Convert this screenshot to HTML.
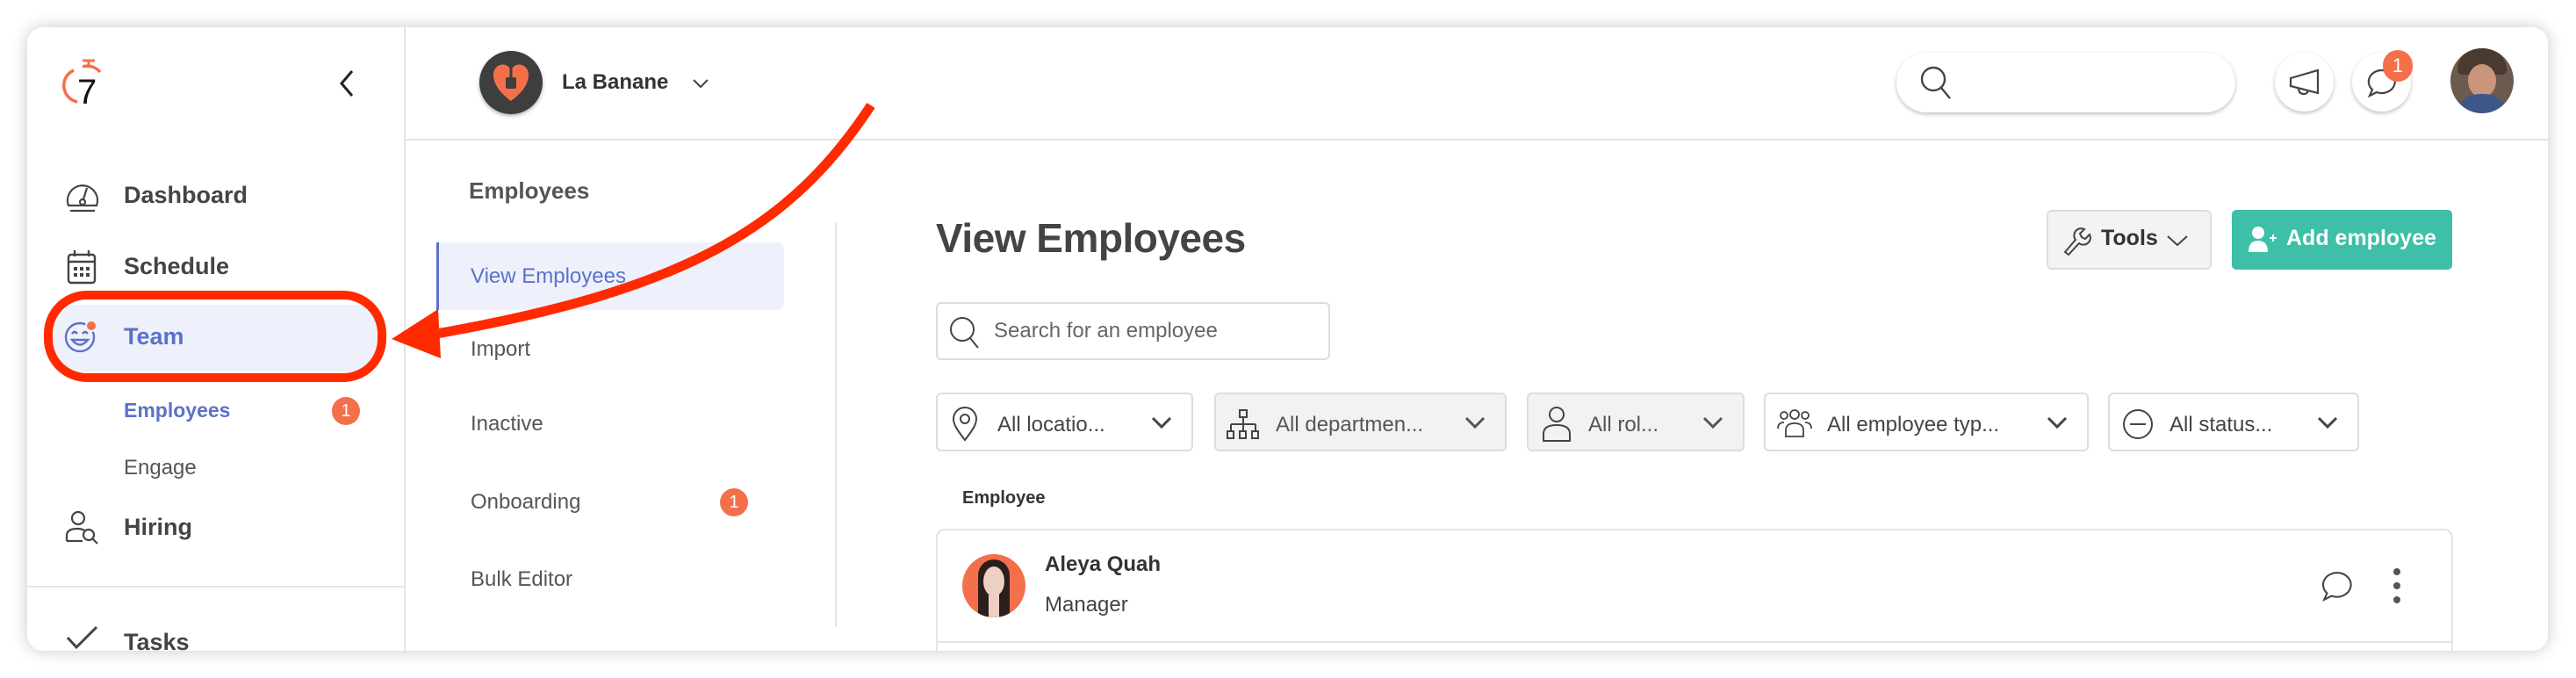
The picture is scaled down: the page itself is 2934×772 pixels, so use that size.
<!DOCTYPE html>
<html><head><meta charset="utf-8"><style>
*{box-sizing:border-box;margin:0;padding:0}
body{width:2934px;height:772px;background:#fff;font-family:"Liberation Sans",Arial,sans-serif;position:relative;overflow:hidden;color:#444}
.card{position:absolute;left:31px;top:31px;width:2871px;height:710px;background:#fff;border-radius:18px;box-shadow:0 0 18px rgba(0,0,0,.22);overflow:hidden}
.in{position:absolute;left:-31px;top:-31px;width:2934px;height:772px}
.a{position:absolute}
.t{position:absolute;white-space:nowrap;line-height:1}
.nav{font-size:27px;font-weight:bold;color:#444}
.sub{font-size:24px;color:#555}
.badge{position:absolute;width:32px;height:32px;border-radius:50%;background:#f4704a;color:#fff;font-size:20px;text-align:center;line-height:32px}
.box{position:absolute;border:2px solid #ddd;border-radius:6px;background:#fff}
.flt{top:447px;height:67px}
.ft{position:absolute;top:21px;font-size:24px;color:#444;white-space:nowrap}
.chev{position:absolute;top:24px;right:22px}
</style></head><body>
<div class="card"><div class="in">
 <div class="a" style="left:460px;top:0;width:2px;height:772px;background:#e4e4e4"></div>
 <div class="a" style="left:0;top:667px;width:461px;height:2px;background:#e4e4e4"></div>
 <div class="a" style="left:461px;top:158px;width:2473px;height:2px;background:#e4e4e4"></div>
 <!-- logo -->
 <svg class="a" style="left:70px;top:64px" width="56" height="58" viewBox="0 0 56 58"><path d="M14 16 A19 19 0 0 0 18 52" fill="none" stroke="#f4704a" stroke-width="3.5"/><path d="M24 12 A19 19 0 0 1 44 18" fill="none" stroke="#f4704a" stroke-width="3.5"/><path d="M24 5 h14 M31 5 v7" stroke="#f4704a" stroke-width="3"/><text x="18" y="54" font-size="40" font-family="Liberation Sans" fill="#111">7</text></svg>
 <svg class="a" style="left:383px;top:78px" width="24" height="34"><path d="M18 3 L6 17 L18 31" fill="none" stroke="#222" stroke-width="3"/></svg>
 <!-- nav -->
 <svg class="a" style="left:74px;top:204px" width="40" height="40" viewBox="0 0 40 40" fill="none" stroke="#444" stroke-width="2.2"><path d="M4 30 A17 17 0 1 1 36 30 Z"/><path d="M6 36 H34"/><circle cx="20" cy="26" r="3"/><path d="M21 23 L25 10"/></svg>
 <div class="t nav" style="left:141px;top:209px">Dashboard</div>
 <svg class="a" style="left:75px;top:283px" width="36" height="42" viewBox="0 0 36 42" fill="none" stroke="#444" stroke-width="2.4"><rect x="3" y="7" width="30" height="32" rx="3"/><path d="M3 15 H33 M10 2 V9 M26 2 V9"/><g fill="#444" stroke="none"><rect x="9" y="21" width="4" height="4"/><rect x="16" y="21" width="4" height="4"/><rect x="23" y="21" width="4" height="4"/><rect x="9" y="28" width="4" height="4"/><rect x="16" y="28" width="4" height="4"/><rect x="23" y="28" width="4" height="4"/></g></svg>
 <div class="t nav" style="left:141px;top:290px">Schedule</div>
 <div class="a" style="left:60px;top:347px;width:370px;height:76px;background:#eef1fb;border-radius:10px"></div>
 <svg class="a" style="left:73px;top:362px" width="42" height="42" viewBox="0 0 42 42" fill="none" stroke="#5b72c8" stroke-width="2.4"><circle cx="18" cy="22" r="16"/><path d="M9 18 q3 -4 6 0 M21 18 q3 -4 6 0"/><path d="M9 25 Q18 36 27 25 Z"/><circle cx="31" cy="9" r="6" fill="#f4704a" stroke="#eef1fb" stroke-width="2"/></svg>
 <div class="t nav" style="left:141px;top:370px;color:#5b72c8">Team</div>
 <div class="t sub" style="left:141px;top:456px;color:#5b72c8;font-weight:bold;font-size:23px">Employees</div>
 <div class="badge" style="left:378px;top:452px">1</div>
 <div class="t sub" style="left:141px;top:521px">Engage</div>
 <svg class="a" style="left:74px;top:580px" width="40" height="40" viewBox="0 0 40 40" fill="none" stroke="#444" stroke-width="2.2"><circle cx="15" cy="10" r="7"/><path d="M2 36 V30 q0 -8 12 -8 q5 0 8 2 M2 36 H20"/><circle cx="27" cy="29" r="6"/><path d="M31 33 L37 39"/></svg>
 <div class="t nav" style="left:141px;top:587px">Hiring</div>
 <svg class="a" style="left:74px;top:712px" width="40" height="30"><path d="M3 14 L13 25 L36 2" fill="none" stroke="#444" stroke-width="3"/></svg>
 <div class="t nav" style="left:141px;top:718px">Tasks</div>
 <!-- header -->
 <div class="a" style="left:546px;top:58px;width:72px;height:72px;border-radius:50%;background:#3e3e3e;box-shadow:0 2px 4px rgba(0,0,0,.3)"></div>
 <svg class="a" style="left:560px;top:71px" width="44" height="46" viewBox="0 0 44 46"><path d="M22 44 C6 32 2 22 2 14 C2 5 10 1 16 3 C19 4 21 7 22 9 C23 7 25 4 28 3 C34 1 42 5 42 14 C42 22 38 32 22 44Z" fill="#f4704a"/><rect x="16" y="17" width="12" height="13" rx="2" fill="#3e3e3e"/><path d="M22 6 V17" stroke="#3e3e3e" stroke-width="3"/></svg>
 <div class="t" style="left:640px;top:82px;font-size:24px;font-weight:bold;color:#333">La Banane</div>
 <svg class="a" style="left:788px;top:88px" width="20" height="14"><path d="M2 3 L10 11 L18 3" fill="none" stroke="#444" stroke-width="2"/></svg>
 <div class="a" style="left:2160px;top:60px;width:386px;height:68px;border-radius:34px;background:#fff;box-shadow:0 2px 5px rgba(0,0,0,.25)"></div>
 <svg class="a" style="left:2186px;top:74px" width="40" height="42" fill="none" stroke="#444" stroke-width="2.4"><circle cx="16" cy="16" r="13"/><path d="M25 26 L35 38"/></svg>
 <div class="a" style="left:2591px;top:60px;width:67px;height:67px;border-radius:50%;background:#fff;box-shadow:0 2px 5px rgba(0,0,0,.25)"></div>
 <svg class="a" style="left:2607px;top:78px" width="36" height="32" viewBox="0 0 36 32" fill="none" stroke="#444" stroke-width="2.2"><path d="M2 11 L33 2 V28 L2 20 Z M2 11 V20 M11 22 q0 7 6 7 q4 0 5 -4"/></svg>
 <div class="a" style="left:2679px;top:60px;width:67px;height:67px;border-radius:50%;background:#fff;box-shadow:0 2px 5px rgba(0,0,0,.25)"></div>
 <svg class="a" style="left:2695px;top:77px" width="36" height="36" viewBox="0 0 36 36" fill="none" stroke="#444" stroke-width="2.2"><path d="M18 3 a15 13 0 1 1 -6 25 L4 32 L7 25 A15 13 0 0 1 18 3Z"/></svg>
 <div class="badge" style="left:2714px;top:57px;width:34px;height:36px;border-radius:18px;font-size:22px;line-height:36px">1</div>
 <div class="a" style="left:2791px;top:55px;width:72px;height:74px;border-radius:50%;overflow:hidden;background:#6b5a4e"><div class="a" style="left:8px;top:0;width:56px;height:30px;border-radius:28px 28px 6px 6px;background:#4a3a30"></div><div class="a" style="left:20px;top:18px;width:32px;height:38px;border-radius:50%;background:#c9967c"></div><div class="a" style="left:4px;top:52px;width:64px;height:30px;border-radius:30px 30px 0 0;background:#3f5688"></div></div>
 <!-- second column -->
 <div class="t" style="left:534px;top:204px;font-size:26px;font-weight:bold;color:#555">Employees</div>
 <div class="a" style="left:497px;top:276px;width:396px;height:77px;background:#eef1fb;border-left:3px solid #5b72c8;border-radius:0 8px 8px 0"></div>
 <div class="t" style="left:536px;top:303px;font-size:24px;color:#5b72c8">View Employees</div>
 <div class="t sub" style="left:536px;top:386px">Import</div>
 <div class="t sub" style="left:536px;top:471px">Inactive</div>
 <div class="t sub" style="left:536px;top:560px">Onboarding</div>
 <div class="badge" style="left:820px;top:556px">1</div>
 <div class="t sub" style="left:536px;top:648px">Bulk Editor</div>
 <div class="a" style="left:951px;top:254px;width:2px;height:460px;background:#e4e4e4"></div>
 <!-- main -->
 <div class="t" style="left:1066px;top:248px;font-size:46px;font-weight:bold;color:#444;letter-spacing:-0.5px">View Employees</div>
 <div class="box" style="left:2331px;top:239px;width:188px;height:68px;background:#f3f3f3"></div>
 <svg class="a" style="left:2348px;top:257px" width="34" height="34" viewBox="0 0 34 34" fill="none" stroke="#444" stroke-width="2"><path d="M4 30 L16 16 a8 8 0 0 1 10 -12 l-5 5 l2 4 l4 2 l5 -5 a8 8 0 0 1 -12 10 L8 33 Z"/></svg>
 <div class="t" style="left:2393px;top:259px;font-size:25px;font-weight:bold;color:#333">Tools</div>
 <svg class="a" style="left:2467px;top:266px" width="26" height="16"><path d="M2 3 L13 13 L24 3" fill="none" stroke="#444" stroke-width="2"/></svg>
 <div class="a" style="left:2542px;top:239px;width:251px;height:68px;background:#3dbfa8;border-radius:5px"></div>
 <svg class="a" style="left:2561px;top:257px" width="34" height="32" viewBox="0 0 34 32" fill="#fff"><circle cx="11" cy="8" r="7"/><path d="M0 30 q0 -13 11 -13 q11 0 11 13Z"/><path d="M24 14 h8 M28 10 v8" stroke="#fff" stroke-width="2"/></svg>
 <div class="t" style="left:2604px;top:259px;font-size:25px;font-weight:bold;color:#fff">Add employee</div>
 <div class="box" style="left:1066px;top:344px;width:449px;height:66px"></div>
 <svg class="a" style="left:1080px;top:359px" width="38" height="40" fill="none" stroke="#444" stroke-width="2"><circle cx="16" cy="16" r="13"/><path d="M25 26 L34 37"/></svg>
 <div class="t" style="left:1132px;top:365px;font-size:24px;color:#666">Search for an employee</div>
 <!-- filters -->
 <div class="box flt" style="left:1066px;width:293px"><svg class="a" style="left:16px;top:14px" width="30" height="40" fill="none" stroke="#444" stroke-width="2"><path d="M15 38 C4 24 2 19 2 14 a13 13 0 0 1 26 0 c0 5 -2 10 -13 24Z"/><circle cx="15" cy="14" r="5"/></svg><div class="ft" style="left:68px">All locatio...</div><svg class="chev" width="24" height="16"><path d="M2 3 L12 13 L22 3" fill="none" stroke="#444" stroke-width="3"/></svg></div>
 <div class="box flt" style="left:1383px;width:333px;background:#f2f2f2"><svg class="a" style="left:12px;top:16px" width="38" height="38" fill="none" stroke="#444" stroke-width="2"><rect x="15" y="2" width="8" height="8"/><path d="M19 10 V18 M5 18 H33 M5 18 V26 M19 18 V26 M33 18 V26"/><rect x="1" y="26" width="7" height="8"/><rect x="15" y="26" width="7" height="8"/><rect x="29" y="26" width="7" height="8"/></svg><div class="ft" style="left:68px;color:#555">All departmen...</div><svg class="chev" width="24" height="16"><path d="M2 3 L12 13 L22 3" fill="none" stroke="#555" stroke-width="3"/></svg></div>
 <div class="box flt" style="left:1739px;width:248px;background:#f2f2f2"><svg class="a" style="left:14px;top:13px" width="36" height="42" fill="none" stroke="#444" stroke-width="2"><circle cx="18" cy="10" r="8"/><path d="M3 40 V32 q0 -10 15 -10 q15 0 15 10 V40Z"/></svg><div class="ft" style="left:68px;color:#555">All rol...</div><svg class="chev" width="24" height="16"><path d="M2 3 L12 13 L22 3" fill="none" stroke="#555" stroke-width="3"/></svg></div>
 <div class="box flt" style="left:2009px;width:370px"><svg class="a" style="left:13px;top:17px" width="40" height="34" fill="none" stroke="#444" stroke-width="1.8"><circle cx="8" cy="7" r="4"/><circle cx="20" cy="6" r="5"/><circle cx="32" cy="7" r="4"/><path d="M1 22 q0 -7 7 -7 M39 22 q0 -7 -7 -7 M10 31 V24 q0 -8 10 -8 q10 0 10 8 V31Z"/></svg><div class="ft" style="left:70px">All employee typ...</div><svg class="chev" width="24" height="16"><path d="M2 3 L12 13 L22 3" fill="none" stroke="#444" stroke-width="3"/></svg></div>
 <div class="box flt" style="left:2401px;width:286px"><svg class="a" style="left:13px;top:15px" width="38" height="38" fill="none" stroke="#444" stroke-width="2"><circle cx="19" cy="19" r="16"/><path d="M10 19 H28"/></svg><div class="ft" style="left:68px">All status...</div><svg class="chev" width="24" height="16"><path d="M2 3 L12 13 L22 3" fill="none" stroke="#444" stroke-width="3"/></svg></div>
 <div class="t" style="left:1096px;top:557px;font-size:20px;font-weight:bold;color:#333">Employee</div>
 <!-- row -->
 <div class="a" style="left:1066px;top:602px;width:1728px;height:200px;border:2px solid #e4e4e4;border-radius:10px"></div>
 <div class="a" style="left:1068px;top:730px;width:1724px;height:2px;background:#e4e4e4"></div>
 <div class="a" style="left:1096px;top:631px;width:72px;height:72px;border-radius:50%;background:#f4704a;overflow:hidden"><div class="a" style="left:18px;top:6px;width:36px;height:70px;border-radius:18px 18px 4px 4px;background:#2a1f1d"></div><div class="a" style="left:24px;top:14px;width:24px;height:34px;border-radius:50%;background:#ecd0c4"></div><div class="a" style="left:30px;top:46px;width:12px;height:30px;background:#ecd0c4"></div></div>
 <div class="t" style="left:1190px;top:631px;font-size:24px;font-weight:bold;color:#333">Aleya Quah</div>
 <div class="t" style="left:1190px;top:677px;font-size:24px;color:#444">Manager</div>
 <svg class="a" style="left:2643px;top:649px" width="38" height="38" viewBox="0 0 36 36" fill="none" stroke="#444" stroke-width="2"><path d="M18 3 a15 13 0 1 1 -6 25 L4 32 L7 25 A15 13 0 0 1 18 3Z"/></svg>
 <svg class="a" style="left:2724px;top:645px" width="12" height="44"><circle cx="6" cy="6" r="4" fill="#555"/><circle cx="6" cy="22" r="4" fill="#555"/><circle cx="6" cy="38" r="4" fill="#555"/></svg>
</div></div>
<!-- red annotation -->
<svg class="a" style="left:0;top:0" width="2934" height="772">
 <rect x="55" y="336" width="380" height="94" rx="44" fill="none" stroke="#ff2a00" stroke-width="10"/>
 <path d="M992 120 C900 260 780 330 497 380" fill="none" stroke="#ff2a00" stroke-width="11"/>
 <polygon points="446,386 499,352 502,408" fill="#ff2a00"/>
</svg>
</body></html>
